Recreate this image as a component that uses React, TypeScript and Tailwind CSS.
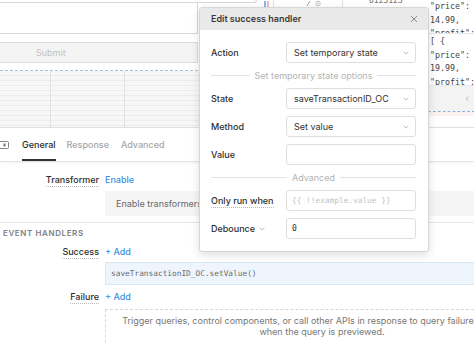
import React from "react";

const mono = "font-['DejaVu_Sans_Mono','Liberation_Mono',monospace]";

function Chevron() {
  return (
    <svg width="6" height="4" viewBox="0 0 6 4" className="shrink-0">
      <path d="M0.6 0.8L3 3.1L5.4 0.8" fill="none" stroke="#b5b5b5" strokeWidth="0.9" />
    </svg>
  );
}

function Select({ value }: { value: string }) {
  return (
    <div className="h-[21px] flex-1 border border-[#dedede] rounded-[3px] flex items-center justify-between pl-[7px] pr-[6px] text-[#333]">
      <span>{value}</span>
      <Chevron />
    </div>
  );
}

function Input({ children }: { children?: React.ReactNode }) {
  return (
    <div className="h-[21px] flex-1 border border-[#dedede] rounded-[3px] flex items-center pl-[5px]">
      {children}
    </div>
  );
}

function Row({
  label,
  children,
  extra = "",
}: {
  label: React.ReactNode;
  children: React.ReactNode;
  extra?: string;
}) {
  return (
    <div className={`flex items-center ${extra}`}>
      <div className="w-[75px] shrink-0 text-[#2e2e2e] font-medium">{label}</div>
      {children}
    </div>
  );
}

function Divider({ text }: { text: string }) {
  return (
    <div className="h-[25px] flex items-center gap-[5px]">
      <div className="flex-1 border-t border-[#e3e3e3]" />
      <span className="text-[#b3b3b3]">{text}</span>
      <div className="flex-1 border-t border-[#e3e3e3]" />
    </div>
  );
}

function FieldLabel({ children }: { children: React.ReactNode }) {
  return (
    <div className="w-[99px] shrink-0 flex justify-end">
      <span className="border-b border-dotted border-[#b8b8b8] leading-[12px] text-[#2e2e2e] font-medium">
        {children}
      </span>
    </div>
  );
}

export default function App() {
  return (
    <div className="relative w-[474px] h-[345px] overflow-hidden bg-white font-['Inter',sans-serif] text-[9px] text-[#333]">
      {/* Canvas */}
      <div className="flex h-[127px]">
        <div className="w-[428px] shrink-0 flex flex-col">
          <div className="flex h-[3px] items-start">
            <div className="w-[257px] h-[3px] shrink-0 border-b border-r border-[#d8d8d8] rounded-br-[3px]" />
            <div className="flex items-start h-[8px] shrink-0">
              <div className="ml-[7px] flex gap-[1px] items-end h-[7px]">
                <div className="w-[2px] h-[6px] bg-[#8fb3e8]" />
                <div className="w-[2px] h-[6px] bg-[#f0b7c4]" />
              </div>
              <div className="ml-[4px] w-px h-[8px] bg-[#e2e2e2]" />
              <svg width="18" height="7" viewBox="0 0 18 7" className="ml-[32px]">
                <path d="M1 6L4 1" stroke="#9a9a9a" strokeWidth="0.9" />
                <circle cx="12" cy="3.5" r="2.3" fill="none" stroke="#b0b0b0" strokeWidth="0.8" />
                <circle cx="12" cy="3.5" r="0.8" fill="#b0b0b0" />
              </svg>
              <div className="ml-[18px] w-px h-[8px] bg-[#e2e2e2]" />
              <div className={`ml-[26px] -mt-[4px] ${mono} text-[8px] text-[#777] leading-[10px]`}>8123123</div>
            </div>
          </div>
          <div className="w-[198px] h-[31px] border-r border-b border-[#d8d8d8] bg-white" />
          <div className="mt-[8px] w-[198px] h-[21px] border border-l-0 border-[#dddddd] bg-[#f4f4f4] flex items-center pl-[36px] text-[#c2c2c2]">
            Submit
          </div>
          <div className="mt-[7px] border-t border-dashed border-[#a9bfdc]" />
          <div className="flex-1 flex bg-[image:repeating-linear-gradient(180deg,#f7f7f7_0px,#f7f7f7_4px,#ededed_4px,#ededed_5px)]">
            <div className="w-[51px] border-r border-[#e0e0e0]" />
            <div className="w-[74px] border-r border-[#e0e0e0]" />
          </div>
        </div>
        <div className={`flex-1 flex flex-col ${mono} text-[8.3px] text-[#444]`}>
          <div className="h-[34px] border-b border-[#e6e6e6] overflow-hidden pl-[2px] leading-[13.5px] whitespace-pre">
            <div>"price":</div>
            <div>14.99,</div>
            <div>"profit":</div>
          </div>
          <div className="h-[51px] overflow-hidden pl-[2px] pt-[1px] leading-[13.5px] whitespace-pre">
            <div>[ {"{"}</div>
            <div>"price":</div>
            <div>19.99,</div>
            <div>"profit":</div>
          </div>
          <div className="h-[26px] bg-[#f3f3f3] border-t border-[#e8e8e8] flex items-center justify-end pr-[6px] font-['Inter',sans-serif] text-[#c4c4c4] text-[10px]">
            ‹
          </div>
          <div className="border-t border-dashed border-[#8fb0dd]" />
          <div className="h-[4px] bg-[#fbf1f1]" />
        </div>
      </div>

      {/* Query panel */}
      <div className="border-t border-[#e0e0e0]">
        <div className="h-[34px] flex items-stretch border-b border-[#e4e4e4] shadow-[0_1px_2px_rgba(0,0,0,0.05)]">
          <div className="flex items-center">
            <svg width="12" height="8" viewBox="0 0 12 8" className="-ml-[3px]">
              <rect x="0.5" y="0.5" width="11" height="7" rx="1" fill="none" stroke="#777" strokeWidth="0.9" />
              <rect x="6.5" y="2.5" width="2" height="3" fill="#777" />
            </svg>
          </div>
          <div className="ml-[13px] flex items-center border-b-2 border-[#333] pt-[2px] text-[#2b2b2b] font-medium">
            General
          </div>
          <div className="ml-[11px] flex items-center text-[#a6a6a6] font-medium">Response</div>
          <div className="ml-[12px] flex items-center text-[#a6a6a6] font-medium">Advanced</div>
        </div>

        <div className="flex items-center mt-[11px] h-[14px]">
          <FieldLabel>Transformer</FieldLabel>
          <span className="ml-[6px] text-[#3b8ee0] font-medium">Enable</span>
        </div>
        <div className="ml-[105px] mt-[4px] w-[434px] h-[25px] bg-[#f5f5f5] flex items-center pl-[11px] text-[#6a6a6a] whitespace-nowrap">
          Enable transformers to transform the data returned by this query.
        </div>
        <div className="mt-[6px] border-t border-[#e6e6e6]" />
        <div className="mt-[5px] h-[10px] flex items-center pl-[3px] text-[8px] font-semibold tracking-[0.6px] text-[#808080]">
          EVENT HANDLERS
        </div>
        <div className="flex items-center mt-[7px] h-[14px]">
          <FieldLabel>Success</FieldLabel>
          <span className="ml-[6px] text-[#3b8ee0] font-medium">+ Add</span>
        </div>
        <div className={`ml-[105px] mt-[3px] w-[434px] h-[23px] bg-[#eef5fc] border border-[#d9e6f3] flex items-center pl-[5px] ${mono} text-[7.8px] text-[#6b6b6b]`}>
          saveTransactionID_OC.setValue()
        </div>
        <div className="flex items-center mt-[5px] h-[14px]">
          <FieldLabel>Failure</FieldLabel>
          <span className="ml-[6px] text-[#3b8ee0] font-medium">+ Add</span>
        </div>
        <div className="ml-[105px] mt-[5px] w-[434px] h-[44px] border border-dashed border-[#d6d6d6] pt-[5px] text-center leading-[11px] text-[#777] whitespace-nowrap">
          Trigger queries, control components, or call other APIs in response to query failure. These will
          <br />
          when the query is previewed.
        </div>
      </div>

      {/* Popover */}
      <div className="absolute left-[199px] top-[7px] w-[230px] bg-white border border-[#d6d6d6] rounded-[3px] shadow-[0_3px_10px_rgba(0,0,0,0.13)] overflow-hidden">
        <div className="h-[22px] bg-[#e9e9e9] flex items-center justify-between pl-[11px] pr-[10px]">
          <span className="font-semibold text-[9px] text-[#3a3a3a]">Edit success handler</span>
          <svg width="8" height="8" viewBox="0 0 8 8">
            <path d="M1 1L7 7M7 1L1 7" stroke="#8e8e8e" strokeWidth="1" />
          </svg>
        </div>
        <div className="pt-[12px] pb-[12px] pl-[11px] pr-[12px] flex flex-col">
          <Row label="Action">
            <Select value="Set temporary state" />
          </Row>
          <Divider text="Set temporary state options" />
          <Row label="State">
            <Select value="saveTransactionID_OC" />
          </Row>
          <Row label="Method" extra="mt-[7px]">
            <Select value="Set value" />
          </Row>
          <Row label="Value" extra="mt-[7px]">
            <Input />
          </Row>
          <Divider text="Advanced" />
          <Row
            label={
              <span className="border-b border-dotted border-[#b8b8b8] leading-[12px] inline-block">Only run when</span>
            }
          >
            <Input>
              <span className={`${mono} text-[7.8px] text-[#c3c3c3]`}>{"{{ !!example.value }}"}</span>
            </Input>
          </Row>
          <Row
            label={
              <span className="inline-flex items-center gap-[4px]">
                Debounce
                <Chevron />
              </span>
            }
            extra="mt-[7px]"
          >
            <Input>
              <span className={`${mono} text-[8px] text-[#333]`}>0</span>
            </Input>
          </Row>
        </div>
      </div>
    </div>
  );
}
